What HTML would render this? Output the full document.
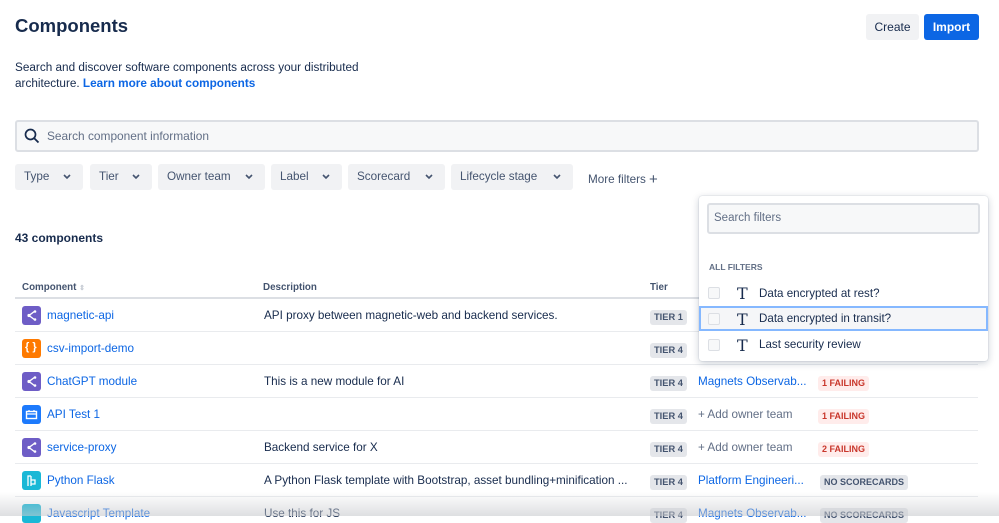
<!DOCTYPE html><html><head><style>
body{margin:0;width:999px;height:516px;overflow:hidden;background:#fff;font-family:"Liberation Sans",sans-serif;color:#172b4d;position:relative}
.a{position:absolute;white-space:nowrap}
.btn{position:absolute;top:164px;height:26px;background:#f1f2f4;border-radius:3px;font-size:11.7px;color:#44546f;line-height:26px;padding-left:9px;box-sizing:border-box}
.btn svg{position:absolute;right:12px;top:10px}
.row{position:absolute;left:15px;width:963px;height:1px;background:#e9ebee}
.ic{position:absolute;left:22px;width:19px;height:19px;border-radius:3px}
.nm{position:absolute;left:47px;font-size:11.7px;color:#0c66e4}
.ds{position:absolute;left:264px;font-size:11.7px;color:#172b4d}
.tier{position:absolute;left:650px;font-size:9.3px;font-weight:bold;color:#44546f;background:#e4e6ea;border-radius:3px;padding:1px 4px;line-height:13px}
.lz{position:absolute;font-size:9px;font-weight:bold;border-radius:3px;padding:1px 4px;line-height:13px}
.fail{color:#c9372c;background:#ffeceb}
.nos{color:#44546f;background:#e4e6ea}
.T{position:absolute;left:737px;font-size:16px;font-family:'DejaVu Serif',serif}
</style></head><body>
<div class="a" style="left:15px;top:15px;font-size:18.5px;font-weight:bold;">Components</div>
<div class="a" style="left:866px;top:14px;width:53px;height:26px;background:#f1f2f4;border-radius:3px;font-size:12px;color:#172b4d;text-align:center;line-height:26px">Create</div>
<div class="a" style="left:924px;top:14px;width:55px;height:26px;background:#0c66e4;border-radius:3px;font-size:12px;color:#fff;text-align:center;line-height:26px;font-weight:bold">Import</div>
<div class="a" style="left:15px;top:60px;font-size:11.75px;line-height:16px">Search and discover software components across your distributed<br>architecture. <span style="color:#0c66e4;font-weight:bold">Learn more about components</span></div>
<div class="a" style="left:15px;top:120px;width:964px;height:32px;box-sizing:border-box;border:2px solid #dcdfe4;border-radius:3px;background:#f7f8f9"></div>
<svg class="a" style="left:24px;top:128px" width="16" height="16" viewBox="0 0 16 16"><circle cx="6.5" cy="6.5" r="5" fill="none" stroke="#172b4d" stroke-width="1.7"/><path d="M10.2 10.2L14.5 14.5" stroke="#172b4d" stroke-width="1.8"/></svg>
<div class="a" style="left:47px;top:129px;font-size:11.9px;color:#626f86">Search component information</div>
<div class="btn" style="left:15px;width:68px">Type<svg width="8" height="6"><path d="M1 1l3 3 3-3" fill="none" stroke="#44546f" stroke-width="1.6"/></svg></div>
<div class="btn" style="left:90px;width:62px">Tier<svg width="8" height="6"><path d="M1 1l3 3 3-3" fill="none" stroke="#44546f" stroke-width="1.6"/></svg></div>
<div class="btn" style="left:158px;width:107px">Owner team<svg width="8" height="6"><path d="M1 1l3 3 3-3" fill="none" stroke="#44546f" stroke-width="1.6"/></svg></div>
<div class="btn" style="left:271px;width:71px">Label<svg width="8" height="6"><path d="M1 1l3 3 3-3" fill="none" stroke="#44546f" stroke-width="1.6"/></svg></div>
<div class="btn" style="left:348px;width:97px">Scorecard<svg width="8" height="6"><path d="M1 1l3 3 3-3" fill="none" stroke="#44546f" stroke-width="1.6"/></svg></div>
<div class="btn" style="left:451px;width:122px">Lifecycle stage<svg width="8" height="6"><path d="M1 1l3 3 3-3" fill="none" stroke="#44546f" stroke-width="1.6"/></svg></div>
<div class="a" style="left:588px;top:170px;font-size:11.7px;color:#44546f">More filters <span style="font-size:15px;position:relative;top:1px">+</span></div>
<div class="a" style="left:15px;top:231px;font-size:12px;font-weight:bold">43 components</div>
<div class="a" style="left:22px;top:282px;font-size:9.8px;font-weight:bold;color:#44546f">Component <span style="color:#c1c7d0;font-size:7px">⇕</span></div>
<div class="a" style="left:263px;top:282px;font-size:9.8px;font-weight:bold;color:#44546f">Description</div>
<div class="a" style="left:650px;top:282px;font-size:9.8px;font-weight:bold;color:#44546f">Tier</div>
<div class="row" style="top:297px;height:2px;background:#dcdfe4"></div>
<div class="row" style="top:331px"></div><div class="row" style="top:364px"></div><div class="row" style="top:397px"></div><div class="row" style="top:430px"></div><div class="row" style="top:463px"></div><div class="row" style="top:496px"></div>

<div class="ic" style="top:306px;background:#6e5dc6"></div><svg class="a" style="left:25px;top:309px" width="13" height="13"><path d="M10 2L4 6.5 10 11" fill="none" stroke="#fff" stroke-width="1.4"/><circle cx="4" cy="6.5" r="1.6" fill="#fff"/><circle cx="10" cy="2.5" r="1.3" fill="#fff"/><circle cx="10" cy="10.5" r="1.3" fill="#fff"/></svg>
<div class="nm" style="top:309px">magnetic-api</div><div class="ds" style="top:309px">API proxy between magnetic-web and backend services.</div><div class="tier" style="top:310px">TIER 1</div>
<div class="ic" style="top:339px;background:#fe7a00"></div><div class="a" style="left:25px;top:341px;font-size:11px;color:#fff;font-weight:bold">{ }</div>
<div class="nm" style="top:342px">csv-import-demo</div><div class="tier" style="top:343px">TIER 4</div>
<div class="ic" style="top:372px;background:#6e5dc6"></div><svg class="a" style="left:25px;top:375px" width="13" height="13"><path d="M10 2L4 6.5 10 11" fill="none" stroke="#fff" stroke-width="1.4"/><circle cx="4" cy="6.5" r="1.6" fill="#fff"/><circle cx="10" cy="2.5" r="1.3" fill="#fff"/><circle cx="10" cy="10.5" r="1.3" fill="#fff"/></svg>
<div class="nm" style="top:375px">ChatGPT module</div><div class="ds" style="top:375px">This is a new module for AI</div><div class="tier" style="top:376px">TIER 4</div>
<div class="nm" style="top:375px;left:698px">Magnets Observab...</div><div class="lz fail" style="top:376px;left:818px">1 FAILING</div>
<div class="ic" style="top:405px;background:#1d7afc"></div><svg class="a" style="left:25px;top:408px" width="13" height="13"><rect x="1.5" y="3.5" width="10" height="7" fill="none" stroke="#fff" stroke-width="1.4"/><path d="M1.5 6h10M4 2v2M9 2v2" stroke="#fff" stroke-width="1.2"/></svg>
<div class="nm" style="top:408px">API Test 1</div><div class="tier" style="top:409px">TIER 4</div>
<div class="a" style="top:408px;left:698px;font-size:11.7px;color:#626f86">+ Add owner team</div><div class="lz fail" style="top:409px;left:818px">1 FAILING</div>
<div class="ic" style="top:438px;background:#6e5dc6"></div><svg class="a" style="left:25px;top:441px" width="13" height="13"><path d="M10 2L4 6.5 10 11" fill="none" stroke="#fff" stroke-width="1.4"/><circle cx="4" cy="6.5" r="1.6" fill="#fff"/><circle cx="10" cy="2.5" r="1.3" fill="#fff"/><circle cx="10" cy="10.5" r="1.3" fill="#fff"/></svg>
<div class="nm" style="top:441px">service-proxy</div><div class="ds" style="top:441px">Backend service for X</div><div class="tier" style="top:442px">TIER 4</div>
<div class="a" style="top:441px;left:698px;font-size:11.7px;color:#626f86">+ Add owner team</div><div class="lz fail" style="top:442px;left:818px">2 FAILING</div>
<div class="ic" style="top:471px;background:#1ab8d6"></div><svg class="a" style="left:25px;top:474px" width="13" height="13"><path d="M3 12V2h3M6 2v10M6 6h4v4H6" fill="none" stroke="#fff" stroke-width="1.3"/></svg>
<div class="nm" style="top:474px">Python Flask</div><div class="ds" style="top:474px">A Python Flask template with Bootstrap, asset bundling+minification ...</div><div class="tier" style="top:475px">TIER 4</div>
<div class="nm" style="top:474px;left:698px">Platform Engineeri...</div><div class="lz nos" style="top:475px;left:820px">NO SCORECARDS</div>
<div class="ic" style="top:504px;background:#1ab8d6"></div>
<div class="nm" style="top:507px">Javascript Template</div><div class="ds" style="top:507px">Use this for JS</div><div class="tier" style="top:508px">TIER 4</div>
<div class="nm" style="top:507px;left:698px">Magnets Observab...</div><div class="lz nos" style="top:508px;left:820px">NO SCORECARDS</div>
<div class="a" style="left:0;top:492px;width:999px;height:24px;background:linear-gradient(rgba(255,255,255,0),rgba(200,202,206,0.6))"></div>

<div class="a" style="left:699px;top:196px;width:289px;height:165px;background:#fff;border-radius:3px;box-shadow:0 2px 8px rgba(9,30,66,0.22),0 0 1px rgba(9,30,66,0.3)"></div>
<div class="a" style="left:707px;top:203px;width:273px;height:31px;box-sizing:border-box;border:2px solid #dcdfe4;border-radius:3px;background:#f7f8f9"></div>
<div class="a" style="left:714px;top:212px;font-size:11.5px;color:#626f86">Search filters</div>
<div class="a" style="left:709px;top:262px;font-size:8.5px;font-weight:bold;color:#626f86">ALL FILTERS</div>
<div class="a" style="left:699px;top:306px;width:289px;height:25px;box-sizing:border-box;border:2px solid #85b8ff;background:#f5f6f8"></div>
<div class="a" style="left:708px;top:287px;width:10px;height:10px;border:1px solid #dcdfe4;border-radius:2px;background:#f7f8f9"></div>
<div class="a" style="left:708px;top:313px;width:10px;height:10px;border:1px solid #dcdfe4;border-radius:2px;background:#f7f8f9"></div>
<div class="a" style="left:708px;top:339px;width:10px;height:10px;border:1px solid #dcdfe4;border-radius:2px;background:#f7f8f9"></div>
<div class="T" style="top:284px">T</div>
<div class="T" style="top:310px">T</div>
<div class="T" style="top:336px">T</div>
<div class="a" style="left:759px;top:287px;font-size:11.6px">Data encrypted at rest?</div>
<div class="a" style="left:759px;top:312px;font-size:11.6px">Data encrypted in transit?</div>
<div class="a" style="left:759px;top:338px;font-size:11.6px">Last security review</div>
</body></html>
